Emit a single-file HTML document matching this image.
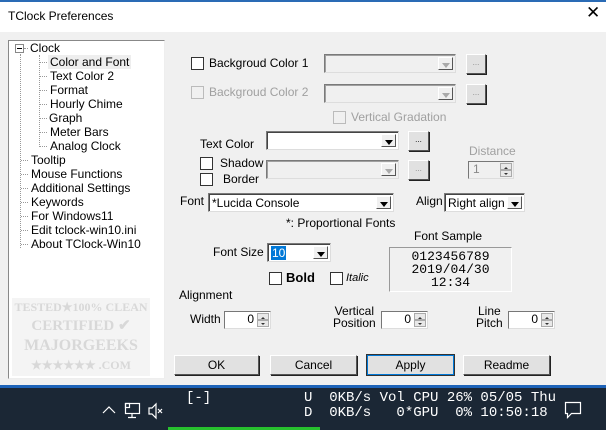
<!DOCTYPE html>
<html><head><meta charset="utf-8"><style>
*{box-sizing:border-box;margin:0;padding:0}
body{width:606px;height:430px;overflow:hidden;background:#f0f0f0;font-family:"Liberation Sans",sans-serif;font-size:12px;color:#000;position:relative}
.a{position:absolute;white-space:nowrap;line-height:14px}
.cb{position:absolute;width:13px;height:13px;background:#fff;border:1px solid #333}
.cbd{position:absolute;width:13px;height:13px;background:#f0f0f0;border:1px solid #bbb}
.combo{position:absolute;background:#fff;border:1px solid #7a7a7a;border-right-color:#ddd;border-bottom-color:#ddd;box-shadow:inset 1px 1px 0 #444}
.combo.d{background:#f0f0f0;box-shadow:inset 1px 1px 0 #a0a0a0}
.arr{position:absolute;right:2px;top:2px;width:15px;bottom:2px;background:#f0f0f0;border:1px solid #fff;border-right-color:#555;border-bottom-color:#555}
.arr:after{content:"";position:absolute;left:3px;top:5px;border:4px solid transparent;border-top:5px solid #000}
.combo.d .arr:after{border-top-color:#aaa}
.btn{position:absolute;background:#e1e1e1;border:1px solid #fff;border-right-color:#555;border-bottom-color:#555;box-shadow:1px 1px 0 #222;text-align:center}
.spin{position:absolute;background:#fff;border:1px solid #777;border-right-color:#ddd;border-bottom-color:#ddd;text-align:right;padding-right:16px;line-height:15px}
.spin i{position:absolute;right:1px;width:12px;height:7px;background:#e8e8e8;border:1px solid #aaa}
.spin i:after{content:"";position:absolute;left:3px;top:1px;border:2px solid transparent;border-bottom:2px solid #333}
.spin i.dn:after{border-bottom:none;border-top:2px solid #333;top:2px}
.h{position:absolute;width:7px;border-top:1px dotted #999}
.t{font-family:"Liberation Mono",monospace;font-size:14px;color:#fff;position:absolute;white-space:pre}
</style></head><body>
<div style="position:absolute;left:0;top:0;width:606px;height:2px;background:#2a6bb5"></div>
<div style="position:absolute;left:0;top:2px;width:606px;height:30px;background:#fff"></div>
<div class="a" style="left:8px;top:9px;font-size:12px">TClock Preferences</div>
<div class="a" style="left:586px;top:6px;font-size:17px;font-weight:300">✕</div>

<div style="position:absolute;left:8px;top:40px;width:157px;height:339px;background:#fff;border:1px solid #888;border-right-color:#eee;border-bottom-color:#eee"></div>
<div style="position:absolute;left:15px;top:44px;width:9px;height:9px;border:1px solid #888;background:#fff"></div>
<div style="position:absolute;left:17px;top:48px;width:5px;height:1px;background:#000"></div>
<div class="h" style="left:24px;top:48px;width:4px"></div>
<div style="position:absolute;left:20px;top:54px;height:194px;border-left:1px dotted #999"></div>
<div style="position:absolute;left:39px;top:55px;height:92px;border-left:1px dotted #999"></div>
<div class="h" style="left:40px;top:62px"></div><div class="h" style="left:40px;top:76px"></div><div class="h" style="left:40px;top:90px"></div><div class="h" style="left:40px;top:104px"></div><div class="h" style="left:40px;top:118px"></div><div class="h" style="left:40px;top:132px"></div><div class="h" style="left:40px;top:146px"></div>
<div class="h" style="left:21px;top:160px"></div><div class="h" style="left:21px;top:174px"></div><div class="h" style="left:21px;top:188px"></div><div class="h" style="left:21px;top:202px"></div><div class="h" style="left:21px;top:216px"></div><div class="h" style="left:21px;top:230px"></div><div class="h" style="left:21px;top:244px"></div>
<div class="a" style="left:30px;top:41px">Clock</div>
<div class="a" style="left:48px;top:55px;background:#eee;padding:0 2px">Color and Font</div>
<div class="a" style="left:50px;top:69px">Text Color 2</div>
<div class="a" style="left:50px;top:83px">Format</div>
<div class="a" style="left:50px;top:97px">Hourly Chime</div>
<div class="a" style="left:49px;top:111px">Graph</div>
<div class="a" style="left:50px;top:125px">Meter Bars</div>
<div class="a" style="left:50px;top:139px">Analog Clock</div>
<div class="a" style="left:31px;top:153px">Tooltip</div>
<div class="a" style="left:31px;top:167px">Mouse Functions</div>
<div class="a" style="left:31px;top:181px">Additional Settings</div>
<div class="a" style="left:31px;top:195px">Keywords</div>
<div class="a" style="left:31px;top:209px">For Windows11</div>
<div class="a" style="left:31px;top:223px">Edit tclock-win10.ini</div>
<div class="a" style="left:31px;top:237px">About TClock-Win10</div>
<div style="position:absolute;left:12px;top:298px;width:138px;height:78px;background:#f4f4f4;color:#d8d8d8;font-family:'Liberation Serif',serif;font-weight:bold;text-align:center;line-height:19px;font-size:12px;white-space:nowrap;overflow:hidden">TESTED★100% CLEAN<br><span style="font-size:15px">CERTIFIED ✔</span><br><span style="font-size:16px">MAJORGEEKS</span><br>★★★★★★ .COM</div>

<div class="cb" style="left:191px;top:57px"></div>
<div class="a" style="left:209px;top:56px">Backgroud Color 1</div>
<div class="combo d" style="left:324px;top:54px;width:132px;height:19px"><div class="arr"></div></div>
<div class="btn" style="left:466px;top:54px;width:20px;height:20px;font-size:8px;line-height:16px;color:#888">...</div>
<div class="cbd" style="left:191px;top:86px"></div>
<div class="a" style="left:209px;top:85px;color:#a0a0a0">Backgroud Color 2</div>
<div class="combo d" style="left:324px;top:84px;width:132px;height:19px"><div class="arr"></div></div>
<div class="btn" style="left:466px;top:84px;width:20px;height:20px;font-size:8px;line-height:16px;color:#888">...</div>
<div class="cbd" style="left:333px;top:111px"></div>
<div class="a" style="left:351px;top:110px;color:#a0a0a0">Vertical Gradation</div>

<div class="a" style="left:200px;top:137px">Text Color</div>
<div class="combo" style="left:266px;top:131px;width:133px;height:19px"><div class="arr"></div></div>
<div class="btn" style="left:408px;top:131px;width:21px;height:20px;font-size:8px;line-height:16px">...</div>
<div class="a" style="left:469px;top:144px;color:#a0a0a0">Distance</div>
<div class="spin" style="left:468px;top:161px;width:46px;height:18px;background:#f0f0f0;text-align:left;padding-left:4px;color:#888">1<i style="top:1px"></i><i class="dn" style="top:8px"></i></div>
<div class="cb" style="left:200px;top:157px"></div>
<div class="a" style="left:220px;top:156px">Shadow</div>
<div class="cb" style="left:200px;top:173px"></div>
<div class="a" style="left:223px;top:172px">Border</div>
<div class="combo d" style="left:266px;top:160px;width:133px;height:19px"><div class="arr"></div></div>
<div class="btn" style="left:408px;top:160px;width:21px;height:20px;font-size:8px;line-height:16px;color:#888">...</div>

<div class="a" style="left:180px;top:194px">Font</div>
<div class="combo" style="left:208px;top:193px;width:186px;height:19px"><div class="arr"></div><span class="a" style="left:3px;top:2px">*Lucida Console</span></div>
<div class="a" style="left:416px;top:194px">Align</div>
<div class="combo" style="left:444px;top:193px;width:81px;height:19px"><div class="arr"></div><span class="a" style="left:3px;top:2px">Right align</span></div>
<div class="a" style="left:286px;top:216px">*: Proportional Fonts</div>
<div class="a" style="left:414px;top:229px">Font Sample</div>
<div style="position:absolute;left:389px;top:247px;width:123px;height:45px;border:1px solid #999;border-right-color:#fff;border-bottom-color:#fff;font-family:'Liberation Mono',monospace;font-size:13px;line-height:13px;text-align:center;padding-top:2px">0123456789<br>2019/04/30<br>12:34</div>
<div class="a" style="left:213px;top:245px">Font Size</div>
<div class="combo" style="left:267px;top:243px;width:64px;height:19px"><div class="arr"></div><span class="a" style="left:3px;top:2px;background:#0078d7;color:#fff;padding:0 1px">10</span></div>
<div class="cb" style="left:269px;top:272px"></div>
<div class="a" style="left:286px;top:271px;font-weight:bold;font-size:13px">Bold</div>
<div class="cb" style="left:330px;top:272px"></div>
<div class="a" style="left:346px;top:271px;font-style:italic;font-size:11px">Italic</div>
<div class="a" style="left:179px;top:288px">Alignment</div>
<div class="a" style="left:190px;top:312px">Width</div>
<div class="spin" style="left:224px;top:311px;width:47px;height:18px">0<i style="top:1px"></i><i class="dn" style="top:8px"></i></div>
<div class="a" style="left:333px;top:305px;line-height:12px;text-align:center">Vertical<br>Position</div>
<div class="spin" style="left:381px;top:311px;width:47px;height:18px">0<i style="top:1px"></i><i class="dn" style="top:8px"></i></div>
<div class="a" style="left:476px;top:305px;line-height:12px;text-align:center">Line<br>Pitch</div>
<div class="spin" style="left:508px;top:311px;width:47px;height:18px">0<i style="top:1px"></i><i class="dn" style="top:8px"></i></div>

<div class="btn" style="left:174px;top:355px;width:85px;height:20px;line-height:18px">OK</div>
<div class="btn" style="left:270px;top:355px;width:87px;height:20px;line-height:18px">Cancel</div>
<div class="btn" style="left:367px;top:355px;width:87px;height:20px;line-height:18px;border:1px solid #0078d7;box-shadow:0 0 0 1px #333">Apply</div>
<div class="btn" style="left:463px;top:355px;width:87px;height:20px;line-height:18px">Readme</div>

<div style="position:absolute;left:0;top:385px;width:606px;height:45px;background:#1b2735;border-top:3px solid #1e63b8"></div>
<div style="position:absolute;left:168px;top:427px;width:152px;height:3px;background:#27c02e"></div>
<svg style="position:absolute;left:100px;top:400px" width="70" height="22" viewBox="0 0 70 22" fill="none" stroke="#fff" stroke-width="1.2">
<path d="M3 13 L9 7 L15 13"/>
<rect x="25.5" y="3.5" width="14" height="10"/><rect x="25.5" y="3.5" width="4" height="4"/><path d="M32 14v3M28 17.5h8"/>
<path d="M49 8h3l4-4v14l-4-4h-3z"/><path d="M58 9l4 4M62 9l-4 4"/>
</svg>
<div class="t" style="left:186px;top:390px">[-]</div>
<div class="t" style="left:304px;top:390px">U  0KB/s Vol CPU 26% 05/05 Thu</div>
<div class="t" style="left:304px;top:405px">D  0KB/s   0*GPU  0% 10:50:18</div>
<svg style="position:absolute;left:563px;top:400px" width="20" height="20" fill="none" stroke="#fff" stroke-width="1.2"><path d="M2.5 2.5h15v11h-9l-4 4v-4h-2z"/></svg>
</body></html>
